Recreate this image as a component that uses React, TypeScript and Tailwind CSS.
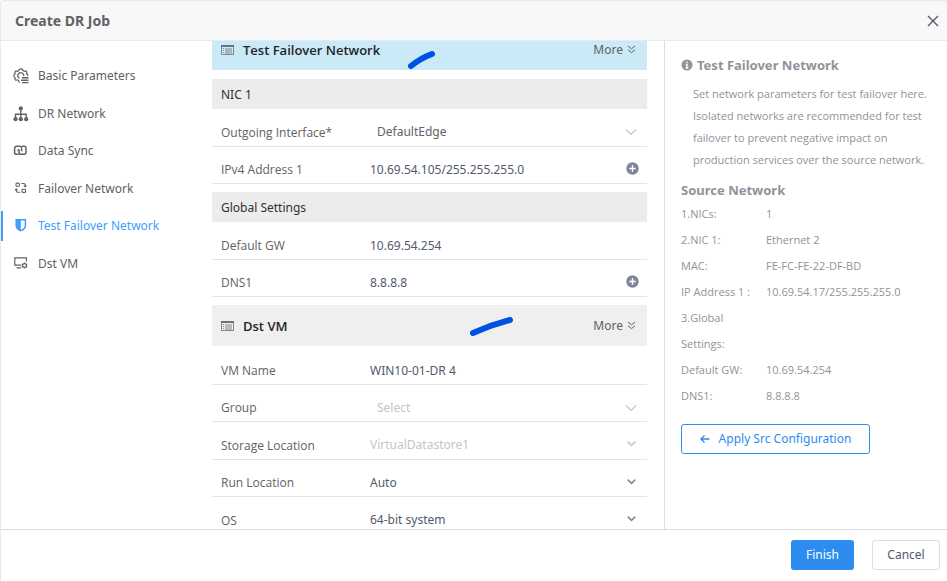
import type { ReactNode } from "react";

const Chevron = ({ className = "", small = false }: { className?: string; small?: boolean }) => (
  <svg
    viewBox="0 0 12 12"
    className={`pointer-events-none shrink-0 fill-none ${small ? "mr-[11px] mb-[3px] size-[9px]" : "mr-[10px] size-3"} ${className}`}
    stroke="currentColor"
    strokeWidth={small ? 2 : 1.1}
  >
    <path d="M1 3.5 6 8.5 11 3.5" />
  </svg>
);

const PanelIcon = () => (
  <svg viewBox="0 0 13 12" className="h-3 w-[13px] shrink-0" fill="none">
    <rect x=".5" y="1.5" width="12" height="9" stroke="#7f8b90" />
    <path d="M0 2h13" stroke="#6b7377" strokeWidth="2" />
    <path d="M4 4h7v6H4z" fill="#8b8f92" fillOpacity=".55" />
    <path d="M2 4.5h1M2 6.5h1M2 8.5h1" stroke="#8b8f92" />
  </svg>
);

const PlusButton = ({ label }: { label: string }) => (
  <button type="button" aria-label={label} className="mr-2 mb-[2px] shrink-0 text-[#808695]">
    <svg viewBox="0 0 13 13" className="size-[13px]">
      <circle cx="6.5" cy="6.5" r="6.2" fill="currentColor" />
      <path d="M6.5 3.3v6.4M3.3 6.5h6.4" stroke="#fff" strokeWidth="1.4" />
    </svg>
  </button>
);

const icons: Record<string, ReactNode> = {
  gear: (
    <svg viewBox="0 0 16 16" className="size-4" fill="none" stroke="currentColor" strokeWidth="1.2">
      <path d="M7 14.3 5.9 13.9 5.6 12.6 4.2 11.8 2.9 12.3 1.8 11.2 2.2 9.8 1 8.6V6.7L2.2 5.8 1.8 4.3 3 3 4.4 3.4 5.7 2.6 6.1 1.4 7.8 .9 9.6 1.3 10 2.6 11.3 3.4 12.8 3 13.9 4.2 13.5 5.7 14.7 6.8 14.6 8" />
      <path d="M6.5 10.4A3 3 0 1 1 10.8 8" />
      <path d="M9 9.8h6.5M8 12.2h7.5M9 14.6h6.5" strokeWidth="1.4" />
    </svg>
  ),
  tree: (
    <svg viewBox="0 0 16 16" className="size-4" fill="currentColor">
      <circle cx="7.8" cy="2.4" r="2.1" />
      <circle cx="2.5" cy="13.2" r="2.1" />
      <circle cx="7.8" cy="13.2" r="2.1" />
      <circle cx="13.2" cy="13.2" r="2.1" />
      <path d="M7.8 3v10M2.5 13V8.2h10.7V13" fill="none" stroke="currentColor" strokeWidth="1.4" />
    </svg>
  ),
  sync: (
    <svg viewBox="0 0 16 16" className="size-4" fill="none" stroke="currentColor" strokeWidth="1.5">
      <path d="M5.6 11.3H3.4A1.8 1.8 0 0 1 1.6 9.5V5.3A2 2 0 0 1 3.6 3.3H6.8A1.8 1.8 0 0 1 8.6 5.1V8.2" />
      <path d="M9 3.3H11.2A1.8 1.8 0 0 1 13 5.1V9.3A2 2 0 0 1 11 11.3H7.8A1.8 1.8 0 0 1 6 9.5V6.4" />
      <path d="M4.4 7.8 6 6.2" strokeWidth="1.2" />
    </svg>
  ),
  swap: (
    <svg viewBox="0 0 16 16" className="size-4" fill="none" stroke="currentColor" strokeWidth="1.1">
      <rect x="3" y="2.1" width="3.4" height="3.2" rx="1" />
      <rect x="9" y="8.2" width="3.6" height="3.2" rx=".8" />
      <path d="M8.3 2.5H10.8a1.4 1.4 0 0 1 1.4 1.4V5.8M13.4 4.6 12.2 5.8 10.8 4.6M7.3 11.3H4.8a1.8 1.8 0 0 1-1.6-1.8V8M2 9.2 3.2 8 4.6 9.2" />
    </svg>
  ),
  shield: (
    <svg viewBox="0 0 16 16" className="size-4" fill="none">
      <path d="M3.2 1.8h9.2v5.6c0 2.4-1.8 4.3-4.6 5.3-2.8-1-4.6-2.9-4.6-5.3z" stroke="currentColor" strokeWidth="1.5" />
      <path d="M3 1.5h4.8v11.3C5 11.8 3 9.8 3 7.4z" fill="currentColor" />
    </svg>
  ),
  monitor: (
    <svg viewBox="0 0 16 16" className="size-4" fill="none" stroke="currentColor" strokeWidth="1.2">
      <path d="M13.4 5.5V1.8H1.8v7.4h6.4M3.5 11.8h4.7" />
      <circle cx="11.5" cy="9.5" r="1.9" />
      <path d="M11.5 6.4v1.2M11.5 11.4v1.2M8.8 8l1.1.6M13.1 10.4l1.1.6M14.2 8l-1.1.6M9.9 10.4l-1.1.6" />
    </svg>
  ),
};

const steps = [
  { icon: "gear", label: "Basic Parameters" },
  { icon: "tree", label: "DR Network" },
  { icon: "sync", label: "Data Sync" },
  { icon: "swap", label: "Failover Network" },
  { icon: "shield", label: "Test Failover Network", active: true },
  { icon: "monitor", label: "Dst VM" },
];

function SectionHeading({ title, className, children }: { title: string; className: string; children: ReactNode }) {
  return (
    <div className={`relative flex h-[41px] items-center pr-[11px] pl-[9px] ${className}`}>
      <PanelIcon />
      <h2 className="ml-[9px] flex-1 font-['Open_Sans',sans-serif] text-[13px] font-semibold text-[#222428]">{title}</h2>
      {children}
      <button type="button" className="flex items-center gap-1 text-[#606266]">
        More
        <svg viewBox="0 0 9 9" className="size-[9px]" fill="none" stroke="currentColor">
          <path d="M1 1 4.5 3.8 8 1M1 4.8 4.5 7.6 8 4.8" />
        </svg>
      </button>
    </div>
  );
}

function SubHeading({ children }: { children: ReactNode }) {
  return <h3 className="mt-2 flex h-[30px] items-center bg-[#ececec] pt-[2px] pl-[9px] text-[#303133]">{children}</h3>;
}

function Row({ id, label, children }: { id: string; label: string; children: ReactNode }) {
  return (
    <div className="flex h-[38px] items-center border-b border-[#e2e4ec] pt-[9px] even:h-[37px]">
      <label htmlFor={id} className="w-[150px] shrink-0 pt-[1px] pl-[9px] font-['Open_Sans',sans-serif] text-[#606266]">
        {label}
      </label>
      {children}
    </div>
  );
}

const Text = ({ id, value }: { id: string; value: string }) => (
  <input id={id} defaultValue={value} className="h-5 w-0 min-w-0 flex-1 bg-transparent pl-2 text-[#515a6e] outline-none" />
);

const Choice = ({ id, value, className = "", disabled = false }: { id: string; value: string; className?: string; disabled?: boolean }) => (
  <select
    id={id}
    disabled={disabled}
    className={`h-5 w-0 min-w-0 flex-1 appearance-none bg-transparent opacity-100 outline-none ${className}`}
  >
    <option>{value}</option>
  </select>
);

const source = [
  ["1.NICs:", "1"],
  ["2.NIC 1:", "Ethernet 2"],
  ["MAC:", "FE-FC-FE-22-DF-BD"],
  ["IP Address 1 :", "10.69.54.17/255.255.255.0"],
  ["3.Global Settings:", ""],
  ["Default GW:", "10.69.54.254"],
  ["DNS1:", "8.8.8.8"],
];

export default function App() {
  return (
    <div className="flex h-screen flex-col overflow-hidden rounded-tl border-t border-l border-[#e8eaf3] bg-white font-['Noto_Sans',sans-serif] text-[12px] leading-4 text-[#606266]">
      <header className="flex h-10 shrink-0 items-center justify-between border-b border-[#e8eaf3] bg-[#f8f8f8] pr-2 pl-[14px]">
        <h1 className="text-[14px] font-bold">Create DR Job</h1>
        <button type="button" aria-label="Close" className="text-[#515a6e]">
          <svg viewBox="0 0 12 12" className="size-3" stroke="currentColor" strokeWidth="1.4">
            <path d="M1 1 11 11M11 1 1 11" />
          </svg>
        </button>
      </header>

      <div className="flex min-h-0 flex-1">
        <nav className="w-[211px] shrink-0 pt-4">
          <ul>
            {steps.map((s) => (
              <li key={s.label} className="flex h-[38px] items-center even:h-[37px]">
                <a
                  href="#"
                  aria-current={s.active ? "step" : undefined}
                  className={`flex h-[30px] w-full items-center gap-[9px] border-l-2 pl-[10px] ${
                    s.active ? "border-[#409eff] text-[#409eff]" : "border-transparent"
                  }`}
                >
                  {icons[s.icon]}
                  {s.label}
                </a>
              </li>
            ))}
          </ul>
        </nav>

        <main className="min-w-0 flex-1 overflow-hidden pr-[17px]">
          <div className="-mt-3">
            <SectionHeading title="Test Failover Network" className="bg-[#caeaf7]">
              <svg viewBox="0 0 30 22" className="absolute top-[21px] left-[195px] h-[22px] w-[30px]" fill="none">
                <path d="M4 16Q14 8 25 4" stroke="#0050e6" strokeWidth="6" strokeLinecap="round" />
              </svg>
            </SectionHeading>
            <div className="pt-[1px]">
              <SubHeading>NIC 1</SubHeading>
            </div>
            <div>
              <Row id="iface" label="Outgoing Interface*">
                <Choice id="iface" value="DefaultEdge" className="pl-[15px]" />
                <Chevron className="text-[#c0c4cc]" />
              </Row>
              <Row id="ipv4" label="IPv4 Address 1">
                <Text id="ipv4" value="10.69.54.105/255.255.255.0" />
                <PlusButton label="Add IPv4 address" />
              </Row>
            </div>
            <SubHeading>Global Settings</SubHeading>
            <div>
              <Row id="gw" label="Default GW">
                <Text id="gw" value="10.69.54.254" />
              </Row>
              <Row id="dns" label="DNS1">
                <Text id="dns" value="8.8.8.8" />
                <PlusButton label="Add DNS server" />
              </Row>
            </div>
            <SectionHeading title="Dst VM" className="mt-2 bg-[#efefef]">
              <svg viewBox="0 0 46 22" className="absolute top-[11px] left-[257px] h-[22px] w-[46px]" fill="none">
                <path d="M4 17Q22 9 41 4" stroke="#0050e6" strokeWidth="6" strokeLinecap="round" />
              </svg>
            </SectionHeading>
            <div className="pt-[1px]">
              <Row id="vm" label="VM Name">
                <Text id="vm" value="WIN10-01-DR 4" />
              </Row>
              <Row id="group" label="Group">
                <Choice id="group" value="Select" className="pl-[15px] text-[#c0c4cc]" />
                <Chevron className="text-[#c0c4cc]" />
              </Row>
              <Row id="storage" label="Storage Location">
                <Choice id="storage" value="VirtualDatastore1" className="pl-2 text-[#c5c5c5]" disabled />
                <Chevron small className="text-[#c5c8ce]" />
              </Row>
              <Row id="run" label="Run Location">
                <Choice id="run" value="Auto" className="pl-2 text-[#515a6e]" />
                <Chevron small className="text-[#808695]" />
              </Row>
              <Row id="os" label="OS">
                <Choice id="os" value="64-bit system" className="pl-2 text-[#515a6e]" />
                <Chevron small className="text-[#808695]" />
              </Row>
            </div>
          </div>
        </main>

        <aside className="w-[283px] shrink-0 border-l border-[#dcdee2] px-4 pt-4 font-['Open_Sans',sans-serif] text-[11px] text-[#909399]">
          <h2 className="flex items-center gap-1 font-['Noto_Sans',sans-serif] text-[13px] font-bold">
            <svg viewBox="0 0 12 12" className="size-3">
              <circle cx="6" cy="6" r="5.5" fill="currentColor" />
              <path d="M6 2.5v1.5M4.8 5.5H6V9M4.6 9h2.8" stroke="#fff" strokeWidth="1.3" fill="none" />
            </svg>
            Test Failover Network
          </h2>
          <p className="mt-[10px] ml-3 leading-[22px]">
            Set network parameters for test failover here. Isolated networks are recommended for test failover to prevent
            negative impact on production services over the source network.
          </p>
          <h2 className="mt-[11px] font-['Noto_Sans',sans-serif] text-[13px] font-bold">Source Network</h2>
          <table className="mt-[3px] w-full table-fixed text-left leading-[26px]">
            <tbody>
              {source.map(([k, v]) => (
                <tr key={k} className="align-top">
                  <th scope="row" className="w-[85px] pr-2 font-normal">
                    {k}
                  </th>
                  <td>{v}</td>
                </tr>
              ))}
            </tbody>
          </table>
          <button
            type="button"
            className="mt-[15px] flex h-[30px] w-[189px] items-center justify-center gap-[9px] rounded-[3px] border border-[#2d8cf0] font-['Noto_Sans',sans-serif] text-[12px] text-[#2d8cf0]"
          >
            <svg viewBox="0 0 10 10" className="size-[10px]" fill="none" stroke="currentColor" strokeWidth="1.4">
              <path d="M9.5 5H1M4.5 1.5 1 5l3.5 3.5" />
            </svg>
            Apply Src Configuration
          </button>
        </aside>
      </div>

      <footer className="flex h-[52px] shrink-0 items-center justify-end gap-[18px] border-t border-[#d7dde4] pr-[7px] pb-[2px]">
        <button type="button" className="h-[30px] w-[63px] rounded-[3px] bg-[#2d8cf0] text-white">
          Finish
        </button>
        <button type="button" className="h-[30px] w-[68px] rounded-[3px] border border-[#dcdee2] text-[#515a6e]">
          Cancel
        </button>
      </footer>
    </div>
  );
}
